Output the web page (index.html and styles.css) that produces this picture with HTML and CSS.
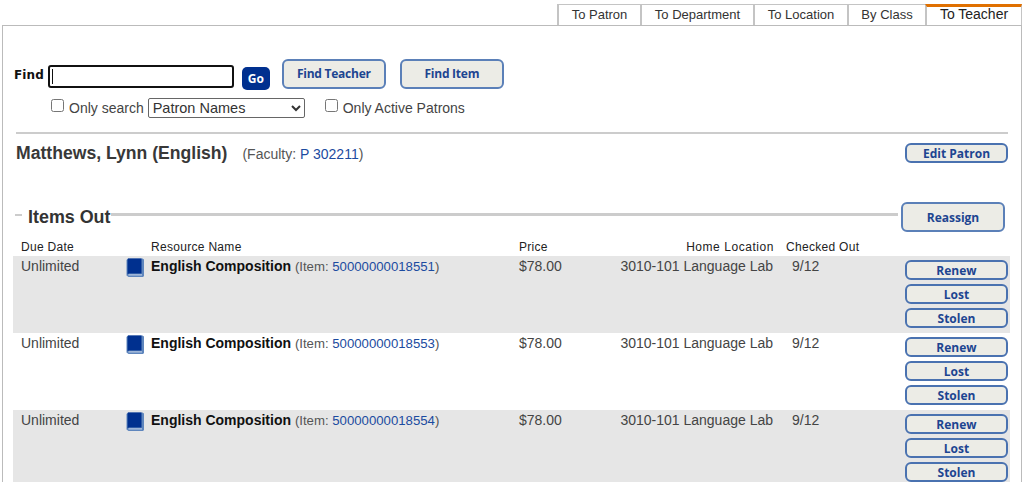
FILE: index.html
```html
<!DOCTYPE html>
<html lang="en">
<head>
<meta charset="utf-8">
<title>To Teacher</title>
<link rel="stylesheet" href="styles.css">
</head>
<body>
<nav class="tabs">
  <a class="tab tab-patron">To Patron</a>
  <a class="tab tab-dept">To Department</a>
  <a class="tab tab-loc">To Location</a>
  <a class="tab tab-class">By Class</a>
  <a class="tab tab-teacher active">To Teacher</a>
</nav>
<main class="panel">
  <section class="search">
    <div class="find-row">
      <label class="find-label">Find</label>
      <input class="find-input" type="text">
      <button class="btn-go">Go</button>
      <button class="btn btn-large btn-teacher">Find Teacher</button>
      <button class="btn btn-large btn-item">Find Item</button>
    </div>
    <div class="opt-row">
      <label class="opt"><input type="checkbox"> Only search</label>
      <select class="opt-select"><option>Patron Names</option></select>
      <label class="opt opt-active"><input type="checkbox"> Only Active Patrons</label>
    </div>
  </section>
  <div class="patron">
    <div class="patron-name"><strong>Matthews, Lynn (English)</strong><span class="patron-meta">(Faculty: <a>P 302211</a>)</span></div>
    <button class="btn btn-small btn-edit">Edit Patron</button>
  </div>
  <div class="items-head">
    <span class="rule-stub"></span>
    <h2>Items Out</h2>
    <span class="rule"></span>
    <button class="btn btn-large btn-reassign">Reassign</button>
  </div>
  <table class="items">
    <colgroup><col class="c-due"><col class="c-icon"><col class="c-name"><col class="c-price"><col class="c-home"><col class="c-out"><col class="c-act"></colgroup>
    <thead>
      <tr><th>Due Date</th><th></th><th class="th-name">Resource Name</th><th>Price</th><th class="right">Home Location</th><th class="th-out">Checked Out</th><th></th></tr>
    </thead>
    <tbody>
      <tr class="shade">
        <td>Unlimited</td>
        <td class="icon"><svg width="19" height="19" viewBox="0 0 19 19"><path d="M2 0.5h14.5l1.5 1v16.5l-1 1H2.5L.5 17.5V2z" fill="#5f86bd"/><path d="M2 .5h13.5v15H2.8l-1.3 1V2z" fill="#00308f"/><path d="M2.5 16.4h13.5v1h-13.5z" fill="#c9d6ea"/></svg></td>
        <td class="name"><b>English Composition</b> <span class="meta">(Item: <a>50000000018551</a>)</span></td>
        <td>$78.00</td>
        <td class="right">3010-101 Language Lab</td>
        <td class="out">9/12</td>
        <td class="act"><button class="btn btn-small">Renew</button><button class="btn btn-small">Lost</button><button class="btn btn-small">Stolen</button></td>
      </tr>
      <tr>
        <td>Unlimited</td>
        <td class="icon"><svg width="19" height="19" viewBox="0 0 19 19"><path d="M2 0.5h14.5l1.5 1v16.5l-1 1H2.5L.5 17.5V2z" fill="#5f86bd"/><path d="M2 .5h13.5v15H2.8l-1.3 1V2z" fill="#00308f"/><path d="M2.5 16.4h13.5v1h-13.5z" fill="#c9d6ea"/></svg></td>
        <td class="name"><b>English Composition</b> <span class="meta">(Item: <a>50000000018553</a>)</span></td>
        <td>$78.00</td>
        <td class="right">3010-101 Language Lab</td>
        <td class="out">9/12</td>
        <td class="act"><button class="btn btn-small">Renew</button><button class="btn btn-small">Lost</button><button class="btn btn-small">Stolen</button></td>
      </tr>
      <tr class="shade">
        <td>Unlimited</td>
        <td class="icon"><svg width="19" height="19" viewBox="0 0 19 19"><path d="M2 0.5h14.5l1.5 1v16.5l-1 1H2.5L.5 17.5V2z" fill="#5f86bd"/><path d="M2 .5h13.5v15H2.8l-1.3 1V2z" fill="#00308f"/><path d="M2.5 16.4h13.5v1h-13.5z" fill="#c9d6ea"/></svg></td>
        <td class="name"><b>English Composition</b> <span class="meta">(Item: <a>50000000018554</a>)</span></td>
        <td>$78.00</td>
        <td class="right">3010-101 Language Lab</td>
        <td class="out">9/12</td>
        <td class="act"><button class="btn btn-small">Renew</button><button class="btn btn-small">Lost</button><button class="btn btn-small">Stolen</button></td>
      </tr>
    </tbody>
  </table>
</main>
</body>
</html>
```
FILE: styles.css
```css
html, body { margin: 0; padding: 0; height: 482px; overflow: hidden; background: #fff; }
body { font-family: "Liberation Sans", Arial, sans-serif; font-size: 14px; color: #333; }
a { color: #1c4ba0; }

.tabs { display: flex; justify-content: flex-end; padding: 4px 5px 0 0; height: 21px; }
.tab { box-sizing: border-box; height: 21px; border: 2px solid #c4c4c4; border-width: 1px 2px 0; font-size: 13px; color: #333; text-align: center; line-height: 19px; margin-left: -2px; background: #fff; }
.tab-patron { width: 85px; }
.tab-dept { width: 115px; }
.tab-loc { width: 96px; }
.tab-class { width: 80px; }
.tab-teacher { width: 97px; }
.tab.active { border-top: 3px solid #e07000; border-right-width: 1px; line-height: 15px; font-size: 14px; color: #222; position: relative; }

.panel { box-sizing: border-box; margin: 0 5px 0 2px; height: 700px; border: 1px solid #bbb; padding: 0 11px 0 10px; }

.search { padding: 33px 0 0 0; height: 108px; box-sizing: border-box; border-bottom: 2px solid #ccc; margin: 0 2px 0 3px; }
.find-row { display: flex; align-items: flex-start; height: 39px; }
.find-label { font-family: "DejaVu Sans", sans-serif; font-size: 12px; font-weight: 700; color: #111; margin: 9px 4px 0 -2px; letter-spacing: .1px; }
.find-input { box-sizing: border-box; width: 186px; height: 23px; margin: 6px 0 0 0; border: 2px solid #111; border-radius: 3px; padding: 0 2px; outline: 0; background: #fff linear-gradient(#111, #111) no-repeat 2px 2px / 1px 15px; }
.btn-go { box-sizing: border-box; width: 28px; height: 23px; margin: 8px 0 0 8px; padding: 0 0 1px; border: 0; border-radius: 5px; background: #00308f; color: #fff; font: 700 12px "Open Sans", sans-serif; }
.btn { box-sizing: border-box; padding: 0; background: #ecece6; border: 2px solid #5b80b8; color: #1d4591; font-family: "Open Sans", sans-serif; font-weight: 700; display: block; }
.btn-large { width: 104px; height: 30px; border-radius: 6px; font-size: 12px; }
.btn-teacher { margin-left: 12px; letter-spacing: -.25px; padding-bottom: 2px; }
.btn-item { margin-left: 14px; letter-spacing: -.25px; padding-bottom: 2px; }
.btn-small { width: 103px; height: 20px; border-radius: 6px; font-size: 12px; line-height: 15px; border-color: #4a72b0; }
.btn-edit { margin-top: 1px; }

.opt-row { display: flex; align-items: flex-start; height: 20px; margin-left: 35px; font-size: 14px; color: #444; }
.opt { display: flex; align-items: center; height: 20px; }
.opt input { width: 13px; height: 13px; margin: 0 5px 6px 0; }
.opt-select { box-sizing: border-box; width: 157px; height: 20px; margin-left: 4px; font: 14.5px "Liberation Sans", sans-serif; color: #333; background: #fff; border: 1px solid #666; border-radius: 2px; padding: 0; }
.opt-active { margin-left: 20px; }

.patron { display: flex; justify-content: space-between; margin: 8px 2px 0 3px; height: 60px; }
.patron-name { line-height: 22px; }
.patron-name strong { font-size: 17.6px; color: #383838; }
.patron-meta { font-size: 14px; margin-left: 15px; color: #555; }

.items-head { display: flex; align-items: center; height: 30px; margin-left: 2px; }
.rule-stub { width: 7px; height: 2px; background: #ccc; margin-right: 6px; margin-top: -4px; }
.rule { flex: 1; height: 3px; background: #ccc; margin: -5px 3px 0 0; }
.items-head h2 { margin: 0; font-size: 17.9px; font-weight: 700; color: #333; line-height: 28px; }
.btn-reassign { margin-right: 5px; }

.items { border-collapse: collapse; table-layout: fixed; width: 997px; margin-top: 6px; font-size: 14px; }
.c-due { width: 105px; }
.c-icon { width: 28px; }
.c-name { width: 365px; }
.c-price { width: 90px; }
.c-home { width: 178px; }
.c-out { width: 116px; }
.c-act { width: 115px; }
th { font-size: 12px; font-weight: 400; color: #222; text-align: left; padding: 2px 0 2px 8px; height: 14px; letter-spacing: .3px; line-height: 14px; }
th.th-name { padding-left: 5px; }
th.th-out { padding-left: 7px; }
th.right { text-align: right; padding: 2px 5px 2px 0; letter-spacing: .55px; }
td { vertical-align: top; padding: 2px 0 0 8px; height: 75px; line-height: 16px; color: #444; font-size: 14px; }
.shade td { background: #e6e6e6; }
td.icon { padding: 2px 0 0 8px; }
td.icon svg { display: block; }
td.name { padding-left: 5px; white-space: nowrap; }
td.name b { color: #111; }
.meta { font-size: 13.2px; color: #555; }
td.right { text-align: right; padding: 2px 6px 0 0; white-space: nowrap; }
td.out { padding-left: 13px; }
td.act { padding: 4px 0 0 10px; height: 73px; }
td.act .btn { margin-bottom: 4px; }
```
